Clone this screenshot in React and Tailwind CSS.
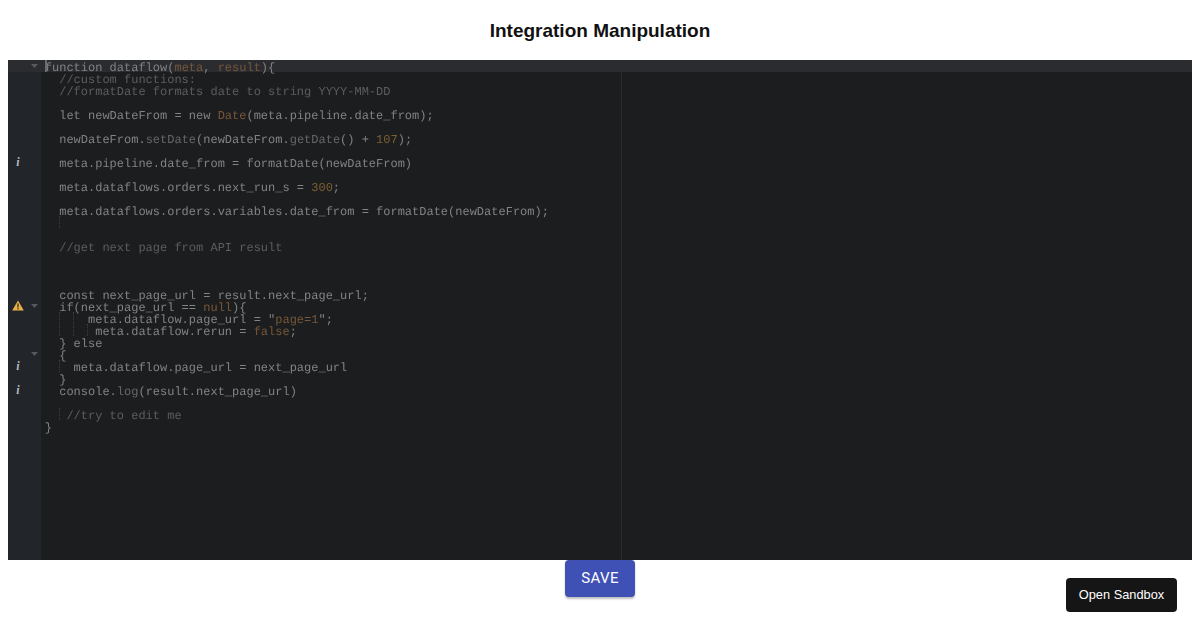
import React from "react";

const C = ({ children }) => <span className="text-[#5c5d5f]">{children}</span>;
const O = ({ children }) => <span className="text-[#78573a]">{children}</span>;
const F = ({ children }) => <span className="text-[#666769]">{children}</span>;
const G = ({ children }) => <span className="text-[#7f5f32]">{children}</span>;

const lines = [
    <>function dataflow(<O>meta</O>, <O>result</O>){"{"}</>,
    <C>{"  //custom functions:"}</C>,
    <C>{"  //formatDate formats date to string YYYY-MM-DD"}</C>,
    "",
    <>{"  let newDateFrom = new "}<O>Date</O>(meta.pipeline.date_from);</>,
    "",
    <>{"  newDateFrom."}<F>setDate</F>(newDateFrom.<F>getDate</F>() + <G>107</G>);</>,
    "",
    "  meta.pipeline.date_from = formatDate(newDateFrom)",
    "",
    <>{"  meta.dataflows.orders.next_run_s = "}<G>300</G>;</>,
    "",
    "  meta.dataflows.orders.variables.date_from = formatDate(newDateFrom);",
    "",
    "",
    <C>{"  //get next page from API result"}</C>,
    "",
    "",
    "",
    "  const next_page_url = result.next_page_url;",
    <>{"  if(next_page_url == "}<O>null</O>){"{"}</>,
    <>{"      meta.dataflow.page_url = \""}<O>page=1</O>";</>,
    <>{"       meta.dataflow.rerun = "}<O>false</O>;</>,
    "  } else",
    "  {",
    "    meta.dataflow.page_url = next_page_url",
    "  }",
    <>{"  console."}<F>log</F>(result.next_page_url)</>,
    "",
    <C>{"   //try to edit me"}</C>,
    "}",
];

const infoRows = [8, 25, 27];
const warnRows = [20];
const foldRows = [0, 20, 24];

// dotted indent guides: [left offset from code column, first row, row count]
const guides = [
    [18, 13, 1],
    [18, 21, 2],
    [32, 21, 2],
    [46, 22, 1],
    [18, 25, 1],
    [18, 29, 1],
];

function GutterRow({ index }) {
    return (
        <div className={`h-3 flex items-center ${index === 0 ? "bg-[#2a2c30]" : ""}`}>
            <div className="w-5 flex justify-center">
                {infoRows.includes(index) && (
                    <span className="text-[#b8b8b8] text-[12px] leading-3 italic font-bold font-['Liberation_Serif',serif]">i</span>
                )}
                {warnRows.includes(index) && (
                    <svg className="mb-px" width="12" height="11" viewBox="0 0 12 11">
                        <path d="M6 0.5 L11.8 10.5 L0.2 10.5 Z" fill="#e8b04b" />
                        <rect x="5.4" y="3.5" width="1.2" height="4" fill="#2a2418" />
                        <rect x="5.4" y="8.2" width="1.2" height="1.2" fill="#2a2418" />
                    </svg>
                )}
            </div>
            <div className="w-[13px] flex justify-center">
                {foldRows.includes(index) && (
                    <svg width="7" height="4" viewBox="0 0 7 4">
                        <path d="M0 0 H7 L3.5 4 Z" fill="#56595e" />
                    </svg>
                )}
            </div>
        </div>
    );
}

export default function App() {
    return (
        <div className="relative h-[630px] bg-white font-['Liberation_Sans',sans-serif]">
            <h1 className="h-[62px] -mb-[2px] flex items-center justify-center text-[19px] font-bold text-[#111]">
                Integration Manipulation
            </h1>

            <div className="mx-2 h-[500px] flex bg-[#1c1d1f] overflow-hidden">
                <div className="w-[33px] shrink-0 bg-[#22262b]">
                    {lines.map((_, i) => (
                        <GutterRow key={i} index={i} />
                    ))}
                </div>
                <div className="relative flex-1">
                    {/* highlight sits behind the text layer */}
                    <div className="absolute inset-x-0 top-0 h-3 bg-[#2a2c30]" />
                    <div className="relative font-['Liberation_Mono',monospace] text-[12px] leading-4 text-[#828385] [text-rendering:geometricPrecision] will-change-transform translate-x-[-0.2px] translate-y-[-0.4px]">
                        {lines.map((line, i) => (
                            <div key={i} className="h-3 pl-1 whitespace-pre">
                                {line}
                            </div>
                        ))}
                    </div>
                    <div className="absolute left-[4px] top-0 w-[2px] h-3 bg-[#6a6c6e]" />
                    <div className="absolute left-[580px] top-3 bottom-0 w-px bg-[#2a2b2e]" />
                    {guides.map(([left, row, count], i) => (
                        <div
                            key={i}
                            className="absolute border-l border-dotted border-[#3c3e41]"
                            style={{ left, top: row * 12, height: count * 12 }}
                        />
                    ))}
                </div>
            </div>

            <div className="flex justify-center">
                <button className="w-[70px] h-[37px] rounded bg-[#3f51b5] text-white text-[15px] tracking-[0.4px] font-['Roboto',sans-serif] shadow-[0_2px_2px_rgba(0,0,0,0.25)]">
                    SAVE
                </button>
            </div>

            <button className="absolute left-[1066px] top-[578px] w-[111px] h-[34px] rounded bg-[#151515] text-white text-[12.8px]">
                Open Sandbox
            </button>
        </div>
    );
}
